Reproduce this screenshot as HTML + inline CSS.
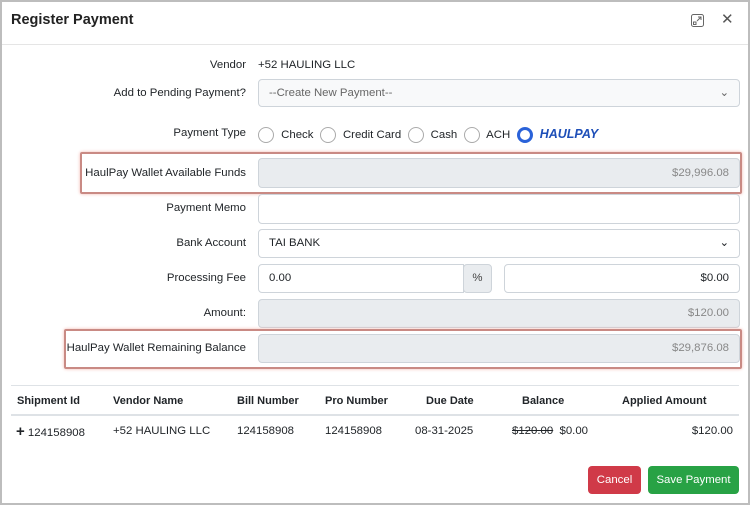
<!DOCTYPE html><html><head><style>
body{margin:0;width:750px;height:505px;overflow:hidden;background:#fff;font-family:"Liberation Sans",sans-serif;font-size:11.4px;color:#212529}
.a{position:absolute}
#f{position:absolute;left:0;top:0;width:746px;height:501px;border:2px solid #bdbdbd}
.l{position:absolute;right:504px;text-align:right}
.i{position:absolute;left:258px;width:482px;height:28px;border:1px solid #ced4da;border-radius:4px;box-sizing:border-box;background:#fff;padding:0 10px;line-height:26px}
.d{background:#e9ecef;color:#888;text-align:right}
.hl{position:absolute;border:2px solid #c98a84;box-shadow:0 0 3px #f2b6b0;border-radius:2px}
.r{display:inline-block;width:14px;height:14px;border:1px solid #aaa;border-radius:50%;vertical-align:middle;margin:0 4px 0 0}
.h{font-weight:bold;font-size:11px;top:395px}
</style></head><body><div id="f"></div>
<div class="a" style="left:11px;top:12px;font-size:14.5px;font-weight:bold;color:#222">Register Payment</div>
<div class="a" style="left:2px;top:44px;width:746px;border-top:1px solid #e5e5e5"></div>
<svg class="a" style="left:691px;top:14px" width="13" height="13" viewBox="0 0 13 13" fill="none" stroke="#666" stroke-width="1"><rect x="0.5" y="0.5" width="12" height="12" rx="2"/><path d="M6 7L10 3M7 3h3v3"/><rect x="2.5" y="8" width="2.5" height="2.5"/></svg>
<div class="a" style="left:721px;top:10px;font-size:15px;color:#555">✕</div>
<div class="l" style="top:59px">Vendor</div><div class="a" style="left:258px;top:59px">+52 HAULING LLC</div>
<div class="l" style="top:87px">Add to Pending Payment?</div>
<div class="i" style="top:79px;background:#f8f9fa;color:#666">--Create New Payment--<span style="position:absolute;right:10px;top:0">⌄</span></div>
<div class="l" style="top:127px">Payment Type</div>
<div class="a" style="left:258px;top:124px;line-height:20px"><span class="r"></span> Check &nbsp;<span class="r"></span> Credit Card &nbsp;<span class="r"></span> Cash &nbsp;<span class="r"></span> ACH &nbsp;<span class="r" style="border:3px solid #2a62d9;width:10px;height:10px"></span> <b style="color:#1e4fb8;font-style:italic;font-size:12.5px">HAULPAY</b></div>
<div class="hl" style="left:80px;top:152px;width:658px;height:38px"></div>
<div class="l" style="top:167px">HaulPay Wallet Available Funds</div>
<div class="i d" style="top:158px;height:30px;line-height:28px">$29,996.08</div>
<div class="l" style="top:202px">Payment Memo</div><div class="i" style="top:194px;height:30px"></div>
<div class="l" style="top:237px">Bank Account</div><div class="i" style="top:229px;height:29px">TAI BANK<span style="position:absolute;right:10px;top:0">⌄</span></div>
<div class="l" style="top:272px">Processing Fee</div>
<div class="i" style="top:264px;width:206px;height:29px;border-radius:4px 0 0 4px">0.00</div>
<div class="i d" style="top:264px;left:463px;width:29px;height:29px;padding:0;text-align:center;color:#444">%</div>
<div class="i" style="top:264px;left:504px;width:236px;height:29px;text-align:right">$0.00</div>
<div class="l" style="top:307px">Amount:</div><div class="i d" style="top:299px;height:29px">$120.00</div>
<div class="hl" style="left:64px;top:329px;width:674px;height:36px"></div>
<div class="l" style="top:342px">HaulPay Wallet Remaining Balance</div>
<div class="i d" style="top:334px;height:29px">$29,876.08</div>
<div class="a" style="left:11px;top:385px;width:728px;border-top:1px solid #dee2e6"></div>
<div class="a" style="left:11px;top:414px;width:728px;border-top:2px solid #dee2e6"></div>
<div class="a h" style="left:17px">Shipment Id</div>
<div class="a h" style="left:113px">Vendor Name</div>
<div class="a h" style="left:237px">Bill Number</div>
<div class="a h" style="left:325px">Pro Number</div>
<div class="a h" style="left:426px">Due Date</div>
<div class="a h" style="left:522px">Balance</div>
<div class="a h" style="left:622px">Applied Amount</div>
<div class="a" style="top:423px;left:16px"><b style="font-size:15px">+</b> 124158908</div>
<div class="a" style="top:425px;left:113px">+52 HAULING LLC</div>
<div class="a" style="top:425px;left:237px">124158908</div>
<div class="a" style="top:425px;left:325px">124158908</div>
<div class="a" style="top:425px;left:415px">08-31-2025</div>
<div class="a" style="top:425px;left:512px"><s>$120.00</s> &nbsp;$0.00</div>
<div class="a" style="top:425px;right:17px">$120.00</div>
<div class="a" style="left:588px;top:466px;width:53px;height:28px;background:#d03a48;color:#fff;border-radius:4px;text-align:center;line-height:28px">Cancel</div>
<div class="a" style="left:648px;top:466px;width:91px;height:28px;background:#28a245;color:#fff;border-radius:4px;text-align:center;line-height:28px">Save Payment</div>
</body></html>
